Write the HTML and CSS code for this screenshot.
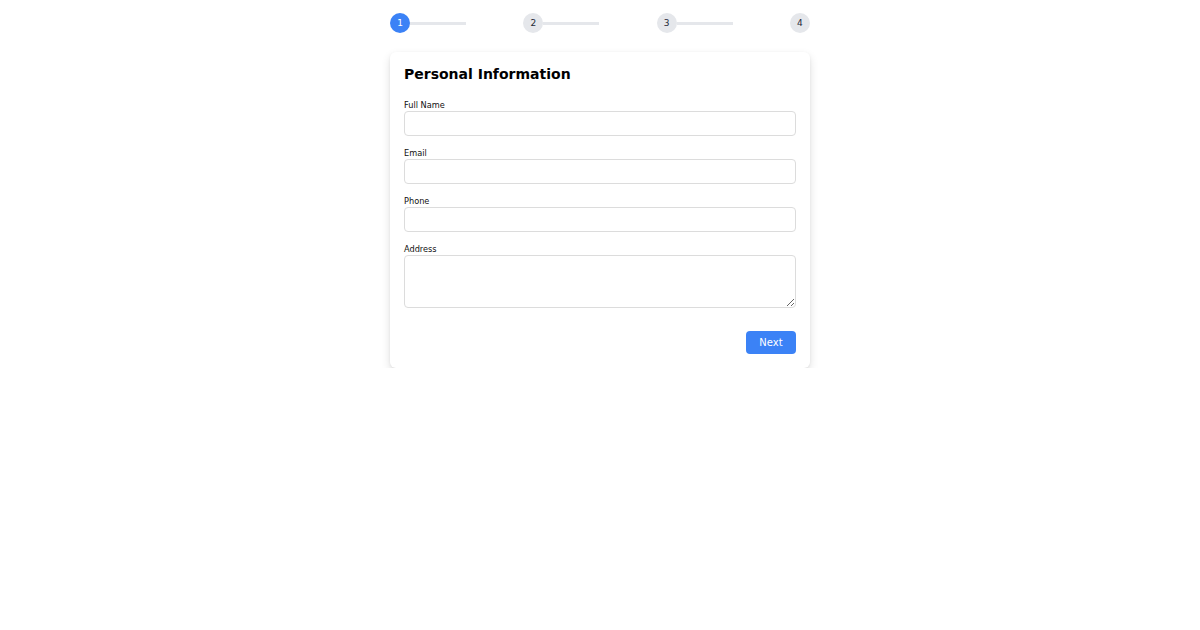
FILE: index.html
```html
<!DOCTYPE html>
<html lang="en">
<head>
<meta charset="UTF-8">
<title>Personal Information</title>
<link rel="stylesheet" href="styles.css">
</head>
<body>
<div class="wrap">

  <div class="steps">
    <div class="step">
      <span class="circle active">1</span>
      <span class="line"></span>
    </div>
    <div class="step">
      <span class="circle">2</span>
      <span class="line"></span>
    </div>
    <div class="step">
      <span class="circle">3</span>
      <span class="line"></span>
    </div>
    <div class="step">
      <span class="circle">4</span>
    </div>
  </div>

  <div class="card">
    <h2>Personal Information</h2>
    <div class="field">
      <label for="fullName">Full Name</label>
      <input type="text" id="fullName">
    </div>
    <div class="field">
      <label for="email">Email</label>
      <input type="email" id="email">
    </div>
    <div class="field">
      <label for="phone">Phone</label>
      <input type="tel" id="phone">
    </div>
    <div class="field">
      <label for="address">Address</label>
      <textarea id="address"></textarea>
    </div>
    <div class="actions">
      <button class="next-btn">Next</button>
    </div>
  </div>

</div>
</body>
</html>
```

FILE: styles.css
```css
body {
  margin: 0;
  font-family: "DejaVu Sans", sans-serif;
  color: #111;
  background: #fff;
}

.wrap {
  width: 420px;
  margin: 0 auto;
  padding-top: 13px;
}

.steps {
  display: flex;
  justify-content: space-between;
  align-items: center;
}

.step {
  display: flex;
  align-items: center;
}

.circle {
  width: 20px;
  height: 20px;
  border-radius: 50%;
  background: #e5e7eb;
  color: #1f2937;
  font-size: 9px;
  display: flex;
  align-items: center;
  justify-content: center;
}

.circle.active {
  background: #3b82f6;
  color: #fff;
}

.line {
  width: 56px;
  height: 3px;
  background: #e5e7eb;
}

.card {
  margin-top: 19px;
  padding: 14px;
  border-radius: 6px;
  background: #fff;
  box-shadow: 0 4px 10px rgba(0, 0, 0, 0.12), 0 1px 3px rgba(0, 0, 0, 0.06);
}

.card h2 {
  margin: 0 0 16px;
  font-size: 14px;
  line-height: 17px;
  font-weight: bold;
  color: #000;
}

.field {
  margin-bottom: 11px;
}

.field label {
  display: block;
  font-size: 8.2px;
  line-height: 12px;
  margin-bottom: 0;
  color: #111;
}

.field input, .field textarea {
  display: block;
  box-sizing: border-box;
  width: 100%;
  height: 25px;
  margin: 0;
  padding: 4px 8px;
  border: 1px solid #dcdcdc;
  border-radius: 4px;
  font-family: inherit;
  font-size: 9px;
}

.field textarea {
  height: 53px;
}

.actions {
  display: flex;
  justify-content: flex-end;
  margin-top: 23px;
}

.next-btn {
  width: 50px;
  height: 23px;
  padding: 0;
  border: none;
  border-radius: 4px;
  background: #3b82f6;
  color: #fff;
  font-family: inherit;
  font-size: 10px;
  cursor: pointer;
}
```
